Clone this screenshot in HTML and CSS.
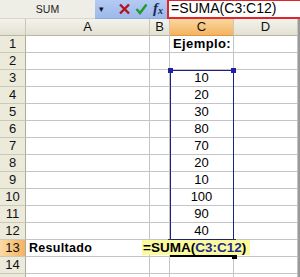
FILE: index.html
```html
<!DOCTYPE html>
<html lang="es">
<head>
    <meta charset="UTF-8">
    <title>SUMA</title>
    <link rel="stylesheet" href="styles.css">
</head>
<body>
    <div class="formula-bar">
        <div class="name-box">SUM</div>
        <div class="tools">
            <span class="arrow">&#9662;</span>
            <svg class="cancel" width="13" height="12" viewBox="0 0 13 12">
                <path d="M2 1.5 L11 10.5 M11 1.5 L2 10.5" stroke="#b3141d" stroke-width="2.4" fill="none"/>
            </svg>
            <svg class="enter" width="13" height="12" viewBox="0 0 13 12">
                <path d="M1.5 6 L5 10 L11.5 1.5" stroke="#1f9a2e" stroke-width="2.4" fill="none"/>
            </svg>
            <span class="fx">f<sub>x</sub></span>
        </div>
        <div class="formula">=SUMA(C3:C12)</div>
    </div>

    <div class="sheet" id="sheet">
        <div class="corner"></div>
        <div class="col-head">A</div>
        <div class="col-head">B</div>
        <div class="col-head active">C</div>
        <div class="col-head">D</div>
        <div class="edge"></div>
    </div>

    <script>
        // valores de la columna C, filas 3 a 12
        const values = { 3: 10, 4: 20, 5: 30, 6: 80, 7: 70, 8: 20, 9: 10, 10: 100, 11: 90, 12: 40 };
        const sheet = document.getElementById('sheet');

        for (let r = 1; r <= 15; r++) {
            // la fila 15 apenas asoma por abajo, sin número
            const label = r < 15 ? r : '';
            let html = '<div class="row-head' + (r === 13 ? ' active' : '') + '">' + label + '</div>';
            html += '<div class="cell">' + (r === 13 ? '<b>Resultado</b>' : '') + '</div>';
            html += '<div class="cell"></div>';
            let c = '';
            if (r === 1) c = '<b class="title">Ejemplo:</b>';
            if (values[r]) c = values[r];
            html += '<div class="cell num">' + c + '</div>';
            html += '<div class="cell"></div>';
            html += '<div class="edge"></div>';
            sheet.insertAdjacentHTML('beforeend', html);
        }

        sheet.insertAdjacentHTML('beforeend', `
            <div class="range">
                <i class="h tl"></i><i class="h tr"></i><i class="h bl"></i><i class="h br"></i>
            </div>
            <div class="active-cell"></div>
            <div class="fill-handle"></div>
            <div class="editor">=SUMA(<span class="ref">C3:C12</span>)</div>
        `);
    </script>
</body>
</html>
```

FILE: styles.css
```css
body {
    margin: 0;
    width: 300px;
    height: 277px;
    overflow: hidden;
    background: #fff;
    font-family: "Liberation Sans", Arial, sans-serif;
}
.formula-bar {
    display: flex;
    height: 19px;
    background: #ecebe3;
}
.name-box {
    width: 95px;
    font-size: 10.5px;
    line-height: 18px;
    text-align: center;
    color: #222;
    background: #eeede6;
    border-bottom: 1px solid #d8d6c8;
    box-sizing: border-box;
}
.tools {
    width: 72px;
    display: flex;
    align-items: center;
    background: linear-gradient(#b3cbf4, #9db8ea);
    box-sizing: border-box;
    border-bottom: 1px solid #8eaadc;
}
.arrow {
    font-size: 9px;
    margin-left: 4px;
    width: 16px;
    color: #111;
}
.cancel {
    margin-left: 3px;
}
.enter {
    margin-left: 4px;
}
.fx {
    margin-left: 5px;
    font-family: "Liberation Serif", serif;
    font-style: italic;
    font-weight: bold;
    font-size: 15px;
    color: #1b2a55;
    line-height: 14px;
}
.fx sub {
    font-size: 10px;
    vertical-align: -1px;
}
.formula {
    flex: 1;
    border: 2px solid #e0242e;
    border-top-width: 1px;
    border-right: none;
    background: #fff;
    font-size: 14px;
    line-height: 15px;
    padding-left: 2px;
    color: #000;
}
.sheet {
    position: relative;
    display: grid;
    grid-template-columns: 26px 124px 20px 64px 64px 2px;
    grid-auto-rows: 17px;
    font-size: 13px;
}
.corner, .col-head, .row-head {
    background: linear-gradient(#f4f3ec, #e3e1d2);
    border-right: 1px solid #c9c7b6;
    border-bottom: 1px solid #b9b6a3;
    box-sizing: border-box;
    text-align: center;
    line-height: 16px;
    color: #111;
}
.col-head.active {
    background: linear-gradient(#fad7a0, #f5b35f);
    border-bottom-color: #d89a4a;
}
.row-head {
    background: #ebeadb;
    border-bottom-color: #cbc8b6;
    border-right-color: #aeab98;
}
.row-head.active {
    background: linear-gradient(90deg, #fbd9a4, #f4b461);
}
.cell {
    border-right: 1px solid #c4c4c4;
    border-bottom: 1px solid #c4c4c4;
    box-sizing: border-box;
    line-height: 16px;
    padding-left: 3px;
    color: #000;
}
.cell b {
    font-size: 12.5px;
    letter-spacing: 0.3px;
}
.num {
    text-align: center;
    padding-left: 0;
}
.num .title {
    display: block;
    text-align: left;
    padding-left: 3px;
    font-size: 13px;
    letter-spacing: 0.4px;
}
.edge {
    background: #9a9a9a;
}
.range {
    position: absolute;
    left: 170px;
    top: 51px;
    width: 64px;
    height: 170px;
    border: 1.5px solid #1f1f88;
    box-sizing: border-box;
}
.h {
    position: absolute;
    width: 5px;
    height: 5px;
    background: #1f1fa8;
}
.h.tl { left: -3px; top: -3px; }
.h.tr { right: -3px; top: -3px; }
.h.bl { left: -3px; bottom: -3px; width: 4px; height: 3px; background: #333; }
.h.br { right: -3px; bottom: -3px; width: 4px; height: 3px; background: #333; }
.active-cell {
    position: absolute;
    left: 170px;
    top: 236px;
    width: 62px;
    height: 2px;
    background: #000;
}
.fill-handle {
    position: absolute;
    left: 232px;
    top: 236px;
    width: 5px;
    height: 4px;
    background: #000;
}
.editor {
    position: absolute;
    left: 142px;
    top: 221px;
    width: 108px;
    height: 15px;
    background: #fbfb9d;
    font-weight: bold;
    font-size: 13.5px;
    line-height: 15px;
    padding-left: 1px;
    box-sizing: border-box;
    white-space: nowrap;
}
.ref {
    color: #1c2a8c;
}
```
